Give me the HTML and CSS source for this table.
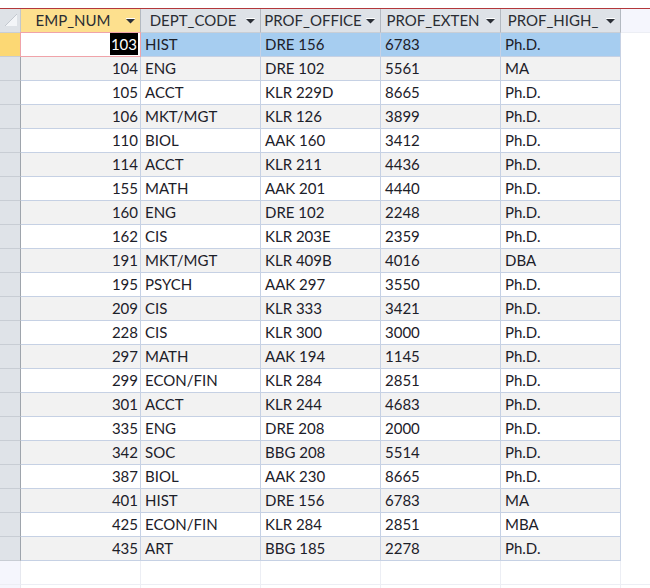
FILE: index.html
```html
<!DOCTYPE html>
<html>
<head>
<meta charset="utf-8">
<link rel="stylesheet" href="styles.css">
</head>
<body>
<div class="sheet">
  <div class="row head">
    <div class="sel corner"><svg width="14" height="14" viewBox="0 0 14 14"><polygon points="13,1 13,13 1,13" fill="#f3f5f8"/><line x1="1" y1="13" x2="13" y2="1" stroke="#c3c8cf" stroke-width="1"/></svg></div>
    <div class="hcell active"><span class="hlabel">EMP_NUM</span><svg class="arrow" width="9" height="6" viewBox="0 0 9 6"><rect x="0" y="0" width="9" height="1" fill="#ffffff"/><polygon points="0,1 9,1 4.5,5.5" fill="#2b2f36"/></svg></div>
    <div class="hcell"><span class="hlabel">DEPT_CODE</span><svg class="arrow" width="9" height="6" viewBox="0 0 9 6"><rect x="0" y="0" width="9" height="1" fill="#ffffff"/><polygon points="0,1 9,1 4.5,5.5" fill="#2b2f36"/></svg></div>
    <div class="hcell"><span class="hlabel">PROF_OFFICE</span><svg class="arrow" width="9" height="6" viewBox="0 0 9 6"><rect x="0" y="0" width="9" height="1" fill="#ffffff"/><polygon points="0,1 9,1 4.5,5.5" fill="#2b2f36"/></svg></div>
    <div class="hcell"><span class="hlabel">PROF_EXTEN</span><svg class="arrow" width="9" height="6" viewBox="0 0 9 6"><rect x="0" y="0" width="9" height="1" fill="#ffffff"/><polygon points="0,1 9,1 4.5,5.5" fill="#2b2f36"/></svg></div>
    <div class="hcell"><span class="hlabel">PROF_HIGH_</span><svg class="arrow" width="9" height="6" viewBox="0 0 9 6"><rect x="0" y="0" width="9" height="1" fill="#ffffff"/><polygon points="0,1 9,1 4.5,5.5" fill="#2b2f36"/></svg></div>
    <div class="fill"></div>
  </div>

  <div class="row current">
    <div class="sel"></div>
    <div class="cell num focus"><span class="hl">103</span></div>
    <div class="cell">HIST</div><div class="cell">DRE 156</div><div class="cell">6783</div><div class="cell">Ph.D.</div>
    <div class="fill"></div>
  </div>
  <div class="row alt"><div class="sel"></div><div class="cell num">104</div><div class="cell">ENG</div><div class="cell">DRE 102</div><div class="cell">5561</div><div class="cell">MA</div><div class="fill"></div></div>
  <div class="row"><div class="sel"></div><div class="cell num">105</div><div class="cell">ACCT</div><div class="cell">KLR 229D</div><div class="cell">8665</div><div class="cell">Ph.D.</div><div class="fill"></div></div>
  <div class="row alt"><div class="sel"></div><div class="cell num">106</div><div class="cell">MKT/MGT</div><div class="cell">KLR 126</div><div class="cell">3899</div><div class="cell">Ph.D.</div><div class="fill"></div></div>
  <div class="row"><div class="sel"></div><div class="cell num">110</div><div class="cell">BIOL</div><div class="cell">AAK 160</div><div class="cell">3412</div><div class="cell">Ph.D.</div><div class="fill"></div></div>
  <div class="row alt"><div class="sel"></div><div class="cell num">114</div><div class="cell">ACCT</div><div class="cell">KLR 211</div><div class="cell">4436</div><div class="cell">Ph.D.</div><div class="fill"></div></div>
  <div class="row"><div class="sel"></div><div class="cell num">155</div><div class="cell">MATH</div><div class="cell">AAK 201</div><div class="cell">4440</div><div class="cell">Ph.D.</div><div class="fill"></div></div>
  <div class="row alt"><div class="sel"></div><div class="cell num">160</div><div class="cell">ENG</div><div class="cell">DRE 102</div><div class="cell">2248</div><div class="cell">Ph.D.</div><div class="fill"></div></div>
  <div class="row"><div class="sel"></div><div class="cell num">162</div><div class="cell">CIS</div><div class="cell">KLR 203E</div><div class="cell">2359</div><div class="cell">Ph.D.</div><div class="fill"></div></div>
  <div class="row alt"><div class="sel"></div><div class="cell num">191</div><div class="cell">MKT/MGT</div><div class="cell">KLR 409B</div><div class="cell">4016</div><div class="cell">DBA</div><div class="fill"></div></div>
  <div class="row"><div class="sel"></div><div class="cell num">195</div><div class="cell">PSYCH</div><div class="cell">AAK 297</div><div class="cell">3550</div><div class="cell">Ph.D.</div><div class="fill"></div></div>
  <div class="row alt"><div class="sel"></div><div class="cell num">209</div><div class="cell">CIS</div><div class="cell">KLR 333</div><div class="cell">3421</div><div class="cell">Ph.D.</div><div class="fill"></div></div>
  <div class="row"><div class="sel"></div><div class="cell num">228</div><div class="cell">CIS</div><div class="cell">KLR 300</div><div class="cell">3000</div><div class="cell">Ph.D.</div><div class="fill"></div></div>
  <div class="row alt"><div class="sel"></div><div class="cell num">297</div><div class="cell">MATH</div><div class="cell">AAK 194</div><div class="cell">1145</div><div class="cell">Ph.D.</div><div class="fill"></div></div>
  <div class="row"><div class="sel"></div><div class="cell num">299</div><div class="cell">ECON/FIN</div><div class="cell">KLR 284</div><div class="cell">2851</div><div class="cell">Ph.D.</div><div class="fill"></div></div>
  <div class="row alt"><div class="sel"></div><div class="cell num">301</div><div class="cell">ACCT</div><div class="cell">KLR 244</div><div class="cell">4683</div><div class="cell">Ph.D.</div><div class="fill"></div></div>
  <div class="row"><div class="sel"></div><div class="cell num">335</div><div class="cell">ENG</div><div class="cell">DRE 208</div><div class="cell">2000</div><div class="cell">Ph.D.</div><div class="fill"></div></div>
  <div class="row alt"><div class="sel"></div><div class="cell num">342</div><div class="cell">SOC</div><div class="cell">BBG 208</div><div class="cell">5514</div><div class="cell">Ph.D.</div><div class="fill"></div></div>
  <div class="row"><div class="sel"></div><div class="cell num">387</div><div class="cell">BIOL</div><div class="cell">AAK 230</div><div class="cell">8665</div><div class="cell">Ph.D.</div><div class="fill"></div></div>
  <div class="row alt"><div class="sel"></div><div class="cell num">401</div><div class="cell">HIST</div><div class="cell">DRE 156</div><div class="cell">6783</div><div class="cell">MA</div><div class="fill"></div></div>
  <div class="row"><div class="sel"></div><div class="cell num">425</div><div class="cell">ECON/FIN</div><div class="cell">KLR 284</div><div class="cell">2851</div><div class="cell">MBA</div><div class="fill"></div></div>
  <div class="row alt"><div class="sel"></div><div class="cell num">435</div><div class="cell">ART</div><div class="cell">BBG 185</div><div class="cell">2278</div><div class="cell">Ph.D.</div><div class="fill"></div></div>

  <div class="row newrow"><div class="sel"></div><div class="cell"></div><div class="cell"></div><div class="cell"></div><div class="cell"></div><div class="cell"></div><div class="fill"></div></div>
  <div class="row empty"><div class="sel"></div><div class="cell"></div><div class="cell"></div><div class="cell"></div><div class="cell"></div><div class="cell"></div><div class="fill"></div></div>
</div>
</body>
</html>
```

FILE: styles.css
```css
html, body {
  margin: 0;
  padding: 0;
  background: #ffffff;
}

body {
  padding-top: 8px;
  font-family: "Lato", "Liberation Sans", sans-serif;
  font-size: 15px;
  color: #1c2029;
}

.sheet {
  border-top: 1px solid #b3373b;
  overflow: hidden;
}

.row {
  display: grid;
  grid-template-columns: 21px repeat(5, 120px) 1fr;
  height: 24px;
}

.row > div {
  box-sizing: border-box;
  height: 24px;
}

.sel {
  background: #dfe3e8;
  border-right: 1px solid #9ea4ac;
  border-bottom: 1px solid #c8cdd4;
}

.cell {
  border-right: 1px solid #c6d1e4;
  border-bottom: 1px solid #c6d1e4;
  line-height: 23px;
  padding-left: 4px;
  white-space: nowrap;
  overflow: hidden;
}

.cell.num {
  text-align: right;
  padding-left: 0;
  padding-right: 2px;
}

.alt .cell {
  background: #f2f2f2;
}

/* header */
.head > div {
  background: #dee2e7;
  border-bottom: 1px solid #c9ced5;
}

.head .corner {
  display: flex;
  align-items: flex-end;
  justify-content: flex-end;
  padding: 0 2px 5px 0;
  border-right: 1px solid #c2c7ce;
}

.hcell {
  display: flex;
  align-items: center;
  border-right: 1px solid #b3b9c1;
  padding-right: 5px;
  padding-left: 2px;
}

.hcell.active {
  background: #fde08e !important;
}

.hlabel {
  flex: 1;
  min-width: 0;
  overflow: hidden;
  white-space: nowrap;
  text-align: center;
  line-height: 23px;
  margin-right: 3px;
  color: #2a2d33;
}

.arrow {
  flex: none;
  display: block;
  margin-top: 1px;
}

.head .fill {
  background: #f5f6fd;
  border-bottom: 1px solid #eceef4;
}

/* current row */
.current .sel {
  background: #fcd874;
}

.current .cell {
  background: #a6cdf0;
}

.current .cell.focus {
  background: #ffffff;
  position: relative;
  overflow: visible;
}

.current .cell.focus::after {
  content: "";
  position: absolute;
  left: -1px;
  top: -1px;
  right: -1px;
  bottom: -1px;
  border: 1px solid #f0a3a9;
  pointer-events: none;
}

.hl {
  display: inline-block;
  background: #000000;
  color: #ffffff;
  line-height: 22px;
  padding: 0 1px 0 1px;
  vertical-align: top;
}

/* new record row and empty area */
.newrow .sel,
.empty .sel {
  background: #f5f6fd;
  border-right: 1px solid #e6e8ef;
  border-bottom: 1px solid #eceef4;
}

.newrow .cell,
.empty .cell {
  border-right: 1px solid #eceef4;
  border-bottom: 1px solid #eceef4;
}

.newrow .fill,
.empty .fill {
  border-bottom: 1px solid #eceef4;
}
```
